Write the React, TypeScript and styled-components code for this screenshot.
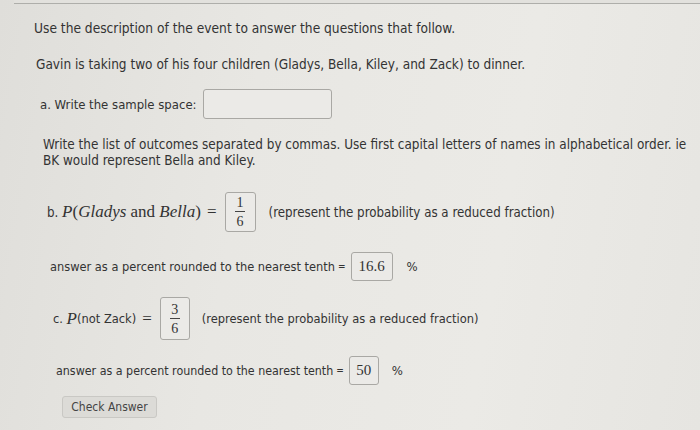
import React from "react";
import styled, { createGlobalStyle } from "styled-components";

const Global = createGlobalStyle`
  html, body { margin: 0; padding: 0; }
  body {
    background: #e6e5e1;
    font-family: "DejaVu Sans Condensed", "Open Sans", sans-serif;
    color: #333333;
  }
`;

const Page = styled.div`
  width: 700px;
  height: 430px;
  overflow: hidden;
  background: linear-gradient(100deg, #dfdeda 0%, #e8e7e3 35%, #ebeae6 70%, #e6e5e1 100%);
  display: flex;
  flex-direction: column;
`;

const TopRule = styled.div`
  height: 3px;
  margin-left: 14px;
  border-bottom: 1px solid #aeaeaa;
  background: #e2e1dd;
`;

const Row = styled.div<{ $mt: number; $ml: number; $h: number; $fs: number }>`
  margin-top: ${(p) => p.$mt}px;
  padding-left: ${(p) => p.$ml}px;
  height: ${(p) => p.$h}px;
  display: flex;
  align-items: center;
  font-size: ${(p) => p.$fs}px;
  white-space: nowrap;
`;

const Para = styled.div<{ $mt: number; $ml: number; $fs: number }>`
  margin-top: ${(p) => p.$mt}px;
  padding-left: ${(p) => p.$ml}px;
  font-size: ${(p) => p.$fs}px;
  line-height: 16px;
  width: 650px;
`;

const TextBox = styled.div<{ $w: number; $h: number; $ml?: number }>`
  width: ${(p) => p.$w}px;
  height: ${(p) => p.$h}px;
  margin-left: ${(p) => p.$ml ?? 0}px;
  box-sizing: border-box;
  border: 1px solid #a9a8a4;
  border-radius: 3px;
  background: #ebeae7;
  display: flex;
  align-items: center;
  justify-content: center;
  font-family: "Liberation Serif", serif;
  font-size: 15px;
  color: #333;
`;

const Frac = styled.div`
  display: flex;
  flex-direction: column;
  align-items: center;
  font-family: "Liberation Serif", serif;
  font-size: 14px;
  line-height: 13px;
`;

const FracBar = styled.div`
  width: 10px;
  height: 1px;
  background: #444;
  margin: 2px 0 3px;
`;

const Math = styled.span`
  font-family: "Liberation Serif", serif;
  font-size: 17px;
`;

const MathI = styled.i`
  font-family: "Liberation Serif", serif;
  font-size: 17px;
`;

const Eq = styled.span`
  font-family: "Liberation Serif", serif;
  font-size: 17px;
  margin: 0 8px 0 6px;
`;

const SmallEq = styled.span`
  font-size: 10px;
  margin: 0 5px 0 3px;
`;

const Pct = styled.span<{ $ml: number }>`
  margin-left: ${(p) => p.$ml}px;
  font-size: 13px;
`;

const Note = styled.span<{ $ml: number }>`
  margin-left: ${(p) => p.$ml}px;
`;

const Button = styled.button<{ $mt: number; $ml: number }>`
  margin-top: ${(p) => p.$mt}px;
  margin-left: ${(p) => p.$ml}px;
  align-self: flex-start;
  width: 95px;
  height: 22px;
  padding: 0;
  border: 1px solid #c9c8c4;
  border-radius: 3px;
  background: #dcdbd7;
  color: #444;
  font-family: inherit;
  font-size: 12px;
`;

export default function App() {
  return (
    <Page>
      <Global />
      <TopRule />
      <Row $mt={16} $ml={34} $h={16} $fs={13.65}>
        Use the description of the event to answer the questions that follow.
      </Row>
      <Row $mt={20} $ml={36} $h={16} $fs={13.5}>
        Gavin is taking two of his four children (Gladys, Bella, Kiley, and Zack) to dinner.
      </Row>
      <Row $mt={17} $ml={40} $h={30} $fs={13}>
        a. Write the sample space:
        <TextBox $w={129} $h={30} $ml={6} />
      </Row>
      <Para $mt={18} $ml={43} $fs={13.4}>
        Write the list of outcomes separated by commas. Use first capital letters of names in alphabetical order. ie
        BK would represent Bella and Kiley.
      </Para>
      <Row $mt={23} $ml={47} $h={40} $fs={13.2}>
        <span>b.&nbsp;</span>
        <MathI>P</MathI>
        <Math>(</Math>
        <MathI>Gladys</MathI>
        <Math>&nbsp;and&nbsp;</Math>
        <MathI>Bella</MathI>
        <Math>)</Math>
        <Eq>=</Eq>
        <TextBox $w={31} $h={40}>
          <Frac>
            <span>1</span>
            <FracBar />
            <span>6</span>
          </Frac>
        </TextBox>
        <Note $ml={13}>(represent the probability as a reduced fraction)</Note>
      </Row>
      <Row $mt={20} $ml={50} $h={29} $fs={12.7}>
        answer as a percent rounded to the nearest tenth
        <SmallEq>=</SmallEq>
        <TextBox $w={42} $h={29}>16.6</TextBox>
        <Pct $ml={14}>%</Pct>
      </Row>
      <Row $mt={16} $ml={53} $h={43} $fs={12.75}>
        <span>c.&nbsp;</span>
        <MathI>P</MathI>
        <span>(not Zack)</span>
        <Eq>=</Eq>
        <TextBox $w={30} $h={43}>
          <Frac>
            <span>3</span>
            <FracBar />
            <span>6</span>
          </Frac>
        </TextBox>
        <Note $ml={12}>(represent the probability as a reduced fraction)</Note>
      </Row>
      <Row $mt={16} $ml={56} $h={29} $fs={12.35}>
        answer as a percent rounded to the nearest tenth
        <SmallEq>=</SmallEq>
        <TextBox $w={30} $h={29}>50</TextBox>
        <Pct $ml={13}>%</Pct>
      </Row>
      <Button $mt={11} $ml={62}>Check Answer</Button>
    </Page>
  );
}
